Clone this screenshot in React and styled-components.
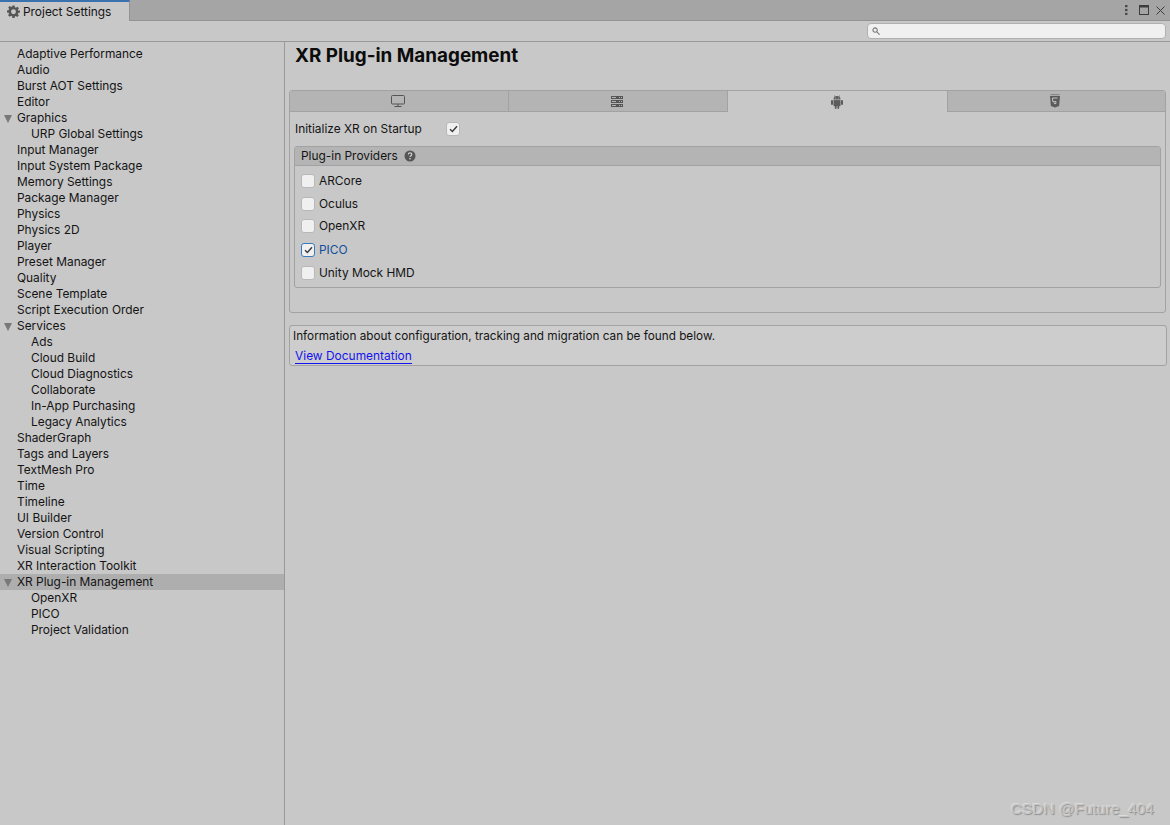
import React from 'react';
import styled, { createGlobalStyle } from 'styled-components';

const Global = createGlobalStyle`
  html, body { margin: 0; padding: 0; height: 100%; }
  body { background: #c8c8c8; font-family: Inter, "Noto Sans", sans-serif; font-size: 11.8px; color: #141414; overflow: hidden; }
  #root { height: 100%; }
`;

const Page = styled.div`
  position: relative;
  width: 1170px;
  height: 825px;
  display: flex;
  flex-direction: column;
`;

const TabStrip = styled.div`
  height: 20px;
  display: flex;
  justify-content: space-between;
  background: #a5a5a5;
  border-bottom: 1px solid #939393;
`;

const WindowTab = styled.div`
  width: 130px;
  height: 21px;
  box-sizing: border-box;
  border-top: 2px solid #3a72b0;
  border-right: 1px solid #939393;
  background: #c8c8c8;
  display: flex;
  align-items: center;
  gap: 3px;
  padding-left: 7px;
  font-size: 11.9px;
`;

const WindowControls = styled.div`
  display: flex;
  align-items: center;
  gap: 7px;
  padding-right: 5px;
`;

const Toolbar = styled.div`
  height: 21px;
  box-sizing: border-box;
  display: flex;
  justify-content: flex-end;
  align-items: center;
  padding: 0 4px 1px 0;
  border-bottom: 1px solid #999;
`;

const Search = styled.div`
  width: 299px;
  height: 16px;
  box-sizing: border-box;
  background: #f0f0f0;
  border: 1px solid #b0b0b0;
  border-radius: 4px;
  display: flex;
  align-items: center;
  padding-left: 4px;
`;

const Body = styled.div`
  flex: 1;
  display: flex;
  min-height: 0;
`;

const Sidebar = styled.div`
  width: 285px;
  box-sizing: border-box;
  border-right: 1px solid #999;
  padding-top: 4px;
  flex-shrink: 0;
  font-size: 11.9px;
`;

const TreeRow = styled.div`
  position: relative;
  height: 16px;
  line-height: 16px;
  padding-left: ${p => (p.$child ? 31 : 17)}px;
  background: ${p => (p.$selected ? '#aeaeae' : 'transparent')};
  white-space: nowrap;
`;

const Arrow = styled.span`
  position: absolute;
  left: 4px;
  top: 5px;
  width: 0;
  height: 0;
  border-left: 4.5px solid transparent;
  border-right: 4.5px solid transparent;
  border-top: 8px solid #787878;
`;

const Content = styled.div`
  flex: 1;
  min-width: 0;
  padding: 0 3px 0 4px;
`;

const Title = styled.h1`
  margin: 0;
  height: 48px;
  padding: 3px 0 0 6px;
  box-sizing: border-box;
  font-size: 18.85px;
  line-height: 22px;
  font-weight: 700;
  color: #0c0c0c;
`;

const Panel = styled.div`
  height: 223px;
  margin-right: 1px;
  box-sizing: border-box;
  border: 1px solid #a2a2a2;
  border-radius: 3px;
  overflow: hidden;
  font-size: 11.9px;
  line-height: 14px;
`;

const Tabs = styled.div`
  display: grid;
  grid-template-columns: 219px 219px 219px 1fr;
  height: 21px;
`;

const PlatformTab = styled.div`
  display: flex;
  align-items: center;
  justify-content: center;
  box-sizing: border-box;
  padding-right: ${p => (p.$last ? 3 : 2)}px;
  background: ${p => (p.$active ? '#c8c8c8' : '#b4b4b4')};
  border-bottom: ${p => (p.$active ? 'none' : '1px solid #a2a2a2')};
  border-right: ${p => (p.$last || p.$active ? 'none' : '1px solid #a2a2a2')};
  border-left: ${p => (p.$afterActive ? '1px solid #a2a2a2' : 'none')};
`;

const StartupRow = styled.div`
  display: flex;
  align-items: center;
  height: 16px;
  margin: 9px 0 0 5px;
`;

const StartupLabel = styled.span`
  width: 151px;
`;

const Box = styled.span`
  width: 14px;
  height: 14px;
  flex-shrink: 0;
  box-sizing: border-box;
  background: #f0f0f0;
  border: 1px solid ${p => (p.$focused ? '#3a79bb' : '#b8b8b8')};
  border-radius: 3px;
  display: flex;
  align-items: center;
  justify-content: center;
`;

const Providers = styled.div`
  margin: 9px 4px 0 4px;
  height: 142px;
  box-sizing: border-box;
  border: 1px solid #a2a2a2;
  border-radius: 3px;
  overflow: hidden;
`;

const ProvidersHead = styled.div`
  height: 19px;
  box-sizing: border-box;
  background: #b4b4b4;
  border-bottom: 1px solid #a2a2a2;
  display: flex;
  align-items: center;
  gap: 6px;
  padding-left: 6px;
`;

const ProviderList = styled.div`
  padding-top: 7px;
`;

const Provider = styled.div`
  display: flex;
  align-items: center;
  gap: 4px;
  height: 16px;
  margin: 0 0 ${p => p.$gap}px 6px;
  color: ${p => (p.$on ? '#0f4f9c' : '#141414')};
`;

const Info = styled.div`
  margin-top: 12px;
  height: 41px;
  box-sizing: border-box;
  border: 1px solid #a2a2a2;
  border-radius: 3px;
  background: #cdcdcd;
  padding: 2px 0 0 3px;
  line-height: 16px;
  font-size: 11.75px;
`;

const DocLink = styled.a`
  display: inline-block;
  margin: 5px 0 0 2px;
  color: #1414f0;
  line-height: 14px;
  font-size: 11.95px;
  border-bottom: 1px solid #1414f0;
`;

const Watermark = styled.div`
  position: absolute;
  right: 16px;
  bottom: 7px;
  font-family: "Liberation Sans", sans-serif;
  font-size: 15.5px;
  color: #c4c4c4;
  text-shadow: 1px 1px 1px #8e8e8e, -1px -1px 0 #dcdcdc;
`;

const DotsSlot = styled.span`
  display: flex;
  margin-right: 4px;
`;

const Gear = () => (
  <svg width="13" height="13" viewBox="0 0 24 24" fill="#555">
    <path fillRule="evenodd" d="M10 1h4l.6 3.2 1.9.8 2.7-1.8 2.8 2.8-1.8 2.7.8 1.9L24 10v4l-3.2.6-.8 1.9 1.8 2.7-2.8 2.8-2.7-1.8-1.9.8L14 24h-4l-.6-3.2-1.9-.8-2.7 1.8-2.8-2.8 1.8-2.7-.8-1.9L0 14v-4l3.2-.6.8-1.9-1.8-2.7 2.8-2.8 2.7 1.8 1.9-.8L10 1zm2 7a4.5 4.5 0 1 0 0 9 4.5 4.5 0 0 0 0-9z" />
  </svg>
);

const MoreDots = () => (
  <svg width="3" height="10" viewBox="0 0 3 10" fill="#4a4a4a">
    <rect x="0" y="0" width="2.5" height="2.2" />
    <rect x="0" y="3.9" width="2.5" height="2.2" />
    <rect x="0" y="7.8" width="2.5" height="2.2" />
  </svg>
);

const Maximize = () => (
  <svg width="10" height="10" viewBox="0 0 10 10" fill="none" stroke="#3c3c3c">
    <rect x="0.5" y="0.5" width="9" height="9" />
    <rect x="0.5" y="0.5" width="9" height="1.5" fill="#3c3c3c" />
  </svg>
);

const Close = () => (
  <svg width="9" height="9" viewBox="0 0 9 9" fill="none" stroke="#3c3c3c" strokeWidth="1">
    <path d="M0.5 0.5l8 8M8.5 0.5l-8 8" />
  </svg>
);

const SearchIcon = () => (
  <svg width="8" height="8" viewBox="0 0 9 9" fill="none" stroke="#777" strokeWidth="1.2">
    <circle cx="3.5" cy="3.5" r="2.5" />
    <path d="M5.5 5.5L8.5 8.5" />
  </svg>
);

const Monitor = () => (
  <svg width="14" height="13" viewBox="0 0 14 13" fill="none" stroke="#555" strokeWidth="1">
    <rect x="0.5" y="0.5" width="13" height="8.5" rx="1" />
    <path d="M7 9v2.5M3.5 11.5h7" />
  </svg>
);

const Server = () => (
  <svg width="12" height="11" viewBox="0 0 12 11" fill="#555">
    <path fillRule="evenodd" d="M0 0h12v3H0zM1 1v1h4V1zM8 1v1h1V1zM10 1v1h1V1z" />
    <path fillRule="evenodd" d="M0 4h12v3H0zM1 5v1h4V5zM8 5v1h1V5zM10 5v1h1V5z" />
    <path fillRule="evenodd" d="M0 8h12v3H0zM1 9v1h4V9zM8 9v1h1V9zM10 9v1h1V9z" />
  </svg>
);

const Android = () => (
  <svg width="12" height="14" viewBox="0 0 12 14" fill="#5c5c5c">
    <path d="M2.5 4.6a3.5 3.5 0 0 1 7 0z" />
    <path d="M3.4 0.3l1 1.8-.4.2-1-1.8zM8.6 0.3l-1 1.8.4.2 1-1.8z" />
    <rect x="2.5" y="5.1" width="7" height="6" />
    <rect x="0" y="5.1" width="2" height="5" rx="1" />
    <rect x="10" y="5.1" width="2" height="5" rx="1" />
    <rect x="3.8" y="10" width="1.8" height="4" rx="0.9" />
    <rect x="6.4" y="10" width="1.8" height="4" rx="0.9" />
    <circle cx="4.6" cy="3" r="0.5" fill="#c8c8c8" />
    <circle cx="7.4" cy="3" r="0.5" fill="#c8c8c8" />
  </svg>
);

const Html5 = () => (
  <svg width="10" height="14" viewBox="0 0 10 14" fill="#5a5a5a">
    <rect x="0.5" y="0" width="9" height="1.2" fill="#888" />
    <path d="M0 2h10l-.9 10L5 13.6.9 12z" />
    <path d="M7.5 4H2.5l.3 3.6h3.2L5.9 9.4 5 9.8l-.9-.4-.1-.9" fill="none" stroke="#d0d0d0" strokeWidth="0.9" />
  </svg>
);

const Help = () => (
  <svg width="12" height="12" viewBox="0 0 12 12">
    <circle cx="6" cy="6" r="5.5" fill="#555" />
    <path d="M4.3 4.6c0-2.2 3.5-2.2 3.5-.1 0 1.3-1.8 1.3-1.8 2.6" fill="none" stroke="#d0d0d0" strokeWidth="1.2" />
    <rect x="5.3" y="8" width="1.4" height="1.4" fill="#d0d0d0" />
  </svg>
);

const Check = () => (
  <svg width="9" height="8" viewBox="0 0 9 8" fill="none" stroke="#3a3a3a" strokeWidth="1.4">
    <path d="M1 4.2l2.4 2.3L8 1.2" />
  </svg>
);

const tree = [
  ['Adaptive Performance'], ['Audio'], ['Burst AOT Settings'], ['Editor'],
  ['Graphics', 'open'], ['URP Global Settings', 'child'],
  ['Input Manager'], ['Input System Package'], ['Memory Settings'], ['Package Manager'],
  ['Physics'], ['Physics 2D'], ['Player'], ['Preset Manager'], ['Quality'],
  ['Scene Template'], ['Script Execution Order'],
  ['Services', 'open'], ['Ads', 'child'], ['Cloud Build', 'child'], ['Cloud Diagnostics', 'child'],
  ['Collaborate', 'child'], ['In-App Purchasing', 'child'], ['Legacy Analytics', 'child'],
  ['ShaderGraph'], ['Tags and Layers'], ['TextMesh Pro'], ['Time'], ['Timeline'], ['UI Builder'],
  ['Version Control'], ['Visual Scripting'], ['XR Interaction Toolkit'],
  ['XR Plug-in Management', 'selected'], ['OpenXR', 'child'], ['PICO', 'child'], ['Project Validation', 'child'],
];

const providers = [
  { name: 'ARCore', gap: 7 },
  { name: 'Oculus', gap: 6 },
  { name: 'OpenXR', gap: 8 },
  { name: 'PICO', gap: 7, on: true },
  { name: 'Unity Mock HMD', gap: 0 },
];

function App() {
  return (
    <Page>
      <Global />
      <TabStrip>
        <WindowTab><Gear />Project Settings</WindowTab>
        <WindowControls>
          <DotsSlot><MoreDots /></DotsSlot>
          <Maximize />
          <Close />
        </WindowControls>
      </TabStrip>
      <Toolbar>
        <Search><SearchIcon /></Search>
      </Toolbar>
      <Body>
        <Sidebar>
          {tree.map(([name, kind]) => (
            <TreeRow key={name} $child={kind === 'child'} $selected={kind === 'selected'}>
              {(kind === 'open' || kind === 'selected') && <Arrow />}
              {name}
            </TreeRow>
          ))}
        </Sidebar>
        <Content>
          <Title>XR Plug-in Management</Title>
          <Panel>
            <Tabs>
              <PlatformTab><Monitor /></PlatformTab>
              <PlatformTab><Server /></PlatformTab>
              <PlatformTab $active><Android /></PlatformTab>
              <PlatformTab $last $afterActive><Html5 /></PlatformTab>
            </Tabs>
            <StartupRow>
              <StartupLabel>Initialize XR on Startup</StartupLabel>
              <Box><Check /></Box>
            </StartupRow>
            <Providers>
              <ProvidersHead>Plug-in Providers <Help /></ProvidersHead>
              <ProviderList>
                {providers.map(p => (
                  <Provider key={p.name} $gap={p.gap} $on={p.on}>
                    <Box $focused={p.on}>{p.on && <Check />}</Box>
                    {p.name}
                  </Provider>
                ))}
              </ProviderList>
            </Providers>
          </Panel>
          <Info>
            Information about configuration, tracking and migration can be found below.
            <br />
            <DocLink>View Documentation</DocLink>
          </Info>
        </Content>
      </Body>
      <Watermark>CSDN @Future_404</Watermark>
    </Page>
  );
}

export default App;
